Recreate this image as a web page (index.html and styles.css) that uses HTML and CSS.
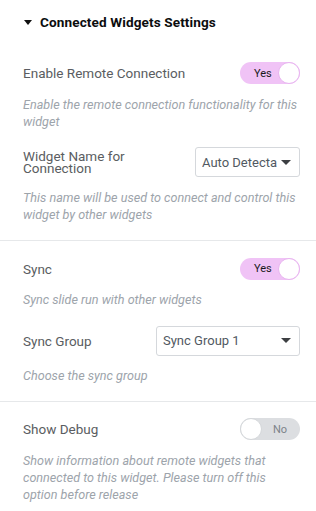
FILE: index.html
```html
<!DOCTYPE html>
<html>
<head>
<meta charset="utf-8">
<link rel="stylesheet" href="styles.css">
</head>
<body>
<div class="panel">
  <div class="section-head">
    <span class="caret"></span>
    <span class="section-title">Connected Widgets Settings</span>
  </div>
  <div class="group first">
    <div class="control">
      <div class="row">
        <span class="label">Enable Remote Connection</span>
        <span class="switch on"><span class="switch-text">Yes</span><span class="knob"></span></span>
      </div>
      <div class="desc">Enable the remote connection functionality for this widget</div>
    </div>
    <div class="control">
      <div class="row">
        <span class="label two">Widget Name for<br>Connection</span>
        <span class="select narrow"><span class="select-text">Auto Detectable</span><span class="arrow"></span></span>
      </div>
      <div class="desc">This name will be used to connect and control this widget by other widgets</div>
    </div>
  </div>
  <div class="group">
    <div class="control">
      <div class="row">
        <span class="label">Sync</span>
        <span class="switch on"><span class="switch-text">Yes</span><span class="knob"></span></span>
      </div>
      <div class="desc">Sync slide run with other widgets</div>
    </div>
    <div class="control">
      <div class="row">
        <span class="label">Sync Group</span>
        <span class="select wide"><span class="select-text">Sync Group 1</span><span class="arrow"></span></span>
      </div>
      <div class="desc">Choose the sync group</div>
    </div>
  </div>
  <div class="group">
    <div class="control">
      <div class="row">
        <span class="label">Show Debug</span>
        <span class="switch off"><span class="knob"></span><span class="switch-text">No</span></span>
      </div>
      <div class="desc">Show information about remote widgets that connected to this widget. Please turn off this option before release</div>
    </div>
  </div>
</div>
</body>
</html>
```

FILE: styles.css
```css
html, body {
  margin: 0;
  padding: 0;
  background: #ffffff;
}
body {
  font-family: Roboto, "Liberation Sans", sans-serif;
  width: 316px;
  height: 511px;
  overflow: hidden;
}
.panel {
  display: flex;
  flex-direction: column;
}
.section-head {
  height: 44px;
  display: flex;
  align-items: center;
  padding-left: 24px;
  gap: 8px;
}
.caret {
  width: 0;
  height: 0;
  border-left: 4px solid transparent;
  border-right: 4px solid transparent;
  border-top: 5px solid #111;
  margin-top: 1px;
}
.section-title {
  font-weight: 700;
  font-size: 13.6px;
  color: #0c0d0e;
  letter-spacing: 0.1px;
}
.group {
  border-top: 1px solid #e6e8ea;
  padding: 16.5px 16px 16.5px 23px;
  display: flex;
  flex-direction: column;
  gap: 17.5px;
}
.group.first {
  border-top: 0;
  padding-top: 18px;
  padding-bottom: 17.5px;
}
.control {
  display: flex;
  flex-direction: column;
  gap: 11.5px;
}
.row {
  display: flex;
  align-items: center;
  justify-content: space-between;
  min-height: 22px;
}
.label {
  font-size: 13.5px;
  color: #5a5d61;
  line-height: 16px;
}
.label.two {
  line-height: 12px;
}
.desc {
  font-size: 12.6px;
  font-style: italic;
  color: #9da4ab;
  line-height: 17px;
}
.switch {
  width: 60px;
  height: 22px;
  border-radius: 11px;
  box-sizing: border-box;
  display: flex;
  align-items: center;
  font-size: 11px;
}
.switch.on {
  background: #f0c3f6;
  justify-content: space-between;
  padding-left: 14px;
}
.switch.on .switch-text {
  color: #1a1a1a;
}
.switch.off {
  background: #dcdee1;
  justify-content: space-between;
  padding-right: 13px;
}
.switch.off .switch-text {
  color: #7d8389;
}
.knob {
  width: 22px;
  height: 22px;
  border-radius: 50%;
  background: #fff;
  box-sizing: border-box;
}
.switch.on .knob {
  border: 1px solid #e8b4f0;
}
.switch.off .knob {
  border: 1px solid #d4d7da;
}
.select {
  height: 30px;
  box-sizing: border-box;
  border: 1px solid #d5d8dc;
  border-radius: 3px;
  display: flex;
  align-items: center;
  padding: 0 8px 0 6px;
  font-size: 13px;
  color: #515962;
  position: relative;
  overflow: hidden;
}
.select.narrow {
  width: 105px;
}
.select.wide {
  width: 144px;
}
.select-text {
  flex: 1;
  white-space: nowrap;
  overflow: hidden;
}
.select .arrow {
  flex: none;
  width: 0;
  height: 0;
  border-left: 5px solid transparent;
  border-right: 5px solid transparent;
  border-top: 5px solid #3c3f42;
  margin-left: 4px;
  background: #fff;
}
```
